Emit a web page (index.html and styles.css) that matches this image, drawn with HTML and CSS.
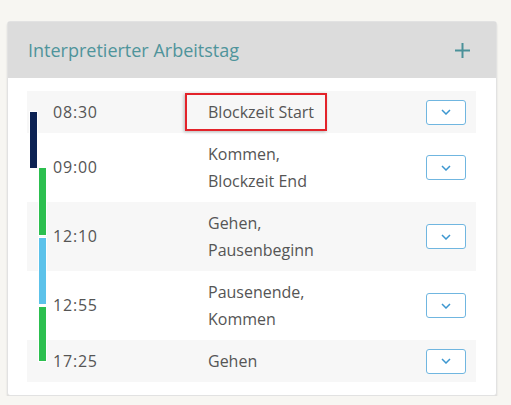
FILE: index.html
```html
<!DOCTYPE html>
<html lang="de">
<head>
<meta charset="utf-8">
<title>Interpretierter Arbeitstag</title>
<link rel="stylesheet" href="styles.css">
</head>
<body>
<div class="card">
  <div class="card-header">
    <h2 class="title">Interpretierter Arbeitstag</h2>
    <button class="add" aria-label="Hinzufügen">
      <svg width="15" height="15" viewBox="0 0 15 15"><path d="M7.5 0V15M0 7.5H15" stroke="#4b9199" stroke-width="2" fill="none"/></svg>
    </button>
  </div>
  <div class="card-body">
    <div class="list">
      <div class="timeline">
        <span class="seg navy" style="top:21px;height:56px"></span>
        <span class="seg green" style="top:77px;height:67px"></span>
        <span class="seg blue" style="top:147px;height:66px"></span>
        <span class="seg green" style="top:216px;height:54px"></span>
      </div>
      <div class="row">
        <div class="time">08:30</div>
        <div class="label highlight">Blockzeit Start</div>
        <button class="toggle"><svg width="10" height="6" viewBox="0 0 10 6"><polyline points="1,1 5,5 9,1" fill="none" stroke="#3d97d0" stroke-width="1.5"/></svg></button>
      </div>
      <div class="row">
        <div class="time">09:00</div>
        <div class="label">Kommen,<br>Blockzeit End</div>
        <button class="toggle"><svg width="10" height="6" viewBox="0 0 10 6"><polyline points="1,1 5,5 9,1" fill="none" stroke="#3d97d0" stroke-width="1.5"/></svg></button>
      </div>
      <div class="row">
        <div class="time">12:10</div>
        <div class="label">Gehen,<br>Pausenbeginn</div>
        <button class="toggle"><svg width="10" height="6" viewBox="0 0 10 6"><polyline points="1,1 5,5 9,1" fill="none" stroke="#3d97d0" stroke-width="1.5"/></svg></button>
      </div>
      <div class="row">
        <div class="time">12:55</div>
        <div class="label">Pausenende,<br>Kommen</div>
        <button class="toggle"><svg width="10" height="6" viewBox="0 0 10 6"><polyline points="1,1 5,5 9,1" fill="none" stroke="#3d97d0" stroke-width="1.5"/></svg></button>
      </div>
      <div class="row">
        <div class="time">17:25</div>
        <div class="label">Gehen</div>
        <button class="toggle"><svg width="10" height="6" viewBox="0 0 10 6"><polyline points="1,1 5,5 9,1" fill="none" stroke="#3d97d0" stroke-width="1.5"/></svg></button>
      </div>
    </div>
  </div>
</div>
</body>
</html>
```
FILE: styles.css
```css
* { box-sizing: border-box; }

body {
  margin: 0;
  padding: 21px 14px 0 7px;
  background: #f7f6f2;
  font-family: "Open Sans", "Liberation Sans", sans-serif;
  color: #555;
}

.card {
  background: #fff;
  border: 1px solid #e2e2e2;
  border-radius: 3px;
  box-shadow: 0 2px 2px rgba(0, 0, 0, 0.13);
  height: 375px;
}

.card-header {
  height: 56px;
  background: #dcdcdc;
  display: flex;
  align-items: center;
  justify-content: space-between;
  padding: 0 26px 0 20px;
}

.title {
  margin: 0;
  font-size: 18px;
  font-weight: 400;
  color: #4f949b;
}

.add {
  border: 0;
  background: none;
  padding: 0;
  width: 15px;
  height: 15px;
  display: flex;
}

.card-body {
  padding: 13px 20px 13px 19px;
}

.list {
  position: relative;
}

.timeline .seg {
  position: absolute;
  width: 7px;
  box-shadow: 0 0 0 1px rgba(255, 255, 255, 0.9);
}

.seg.navy { left: 3px; background: #0c2253; }
.seg.green { left: 12px; background: #2cbf4f; }
.seg.blue { left: 12px; background: #5cc2ea; }

.row {
  display: grid;
  grid-template-columns: 155px 1fr auto;
  align-items: center;
  padding: 7.5px 10px 7.5px 26px;
  line-height: 27px;
  font-size: 16px;
}

.row:nth-child(even) { background: #f7f7f7; }

.time { color: #555; letter-spacing: 0.8px; }

.label { color: #555; }

.label.highlight {
  justify-self: start;
  width: 142px;
  margin: -5.5px 0 -5.5px -23px;
  padding: 3.5px 0 3.5px 21px;
  border: 2px solid #e3232a;
  box-shadow: -1px 1px 3px rgba(0, 0, 0, 0.25);
}

.toggle {
  width: 40px;
  height: 25px;
  border: 1px solid #70b6e0;
  border-radius: 3px;
  background: #fff;
  padding: 0;
  display: flex;
  align-items: center;
  justify-content: center;
}
```
